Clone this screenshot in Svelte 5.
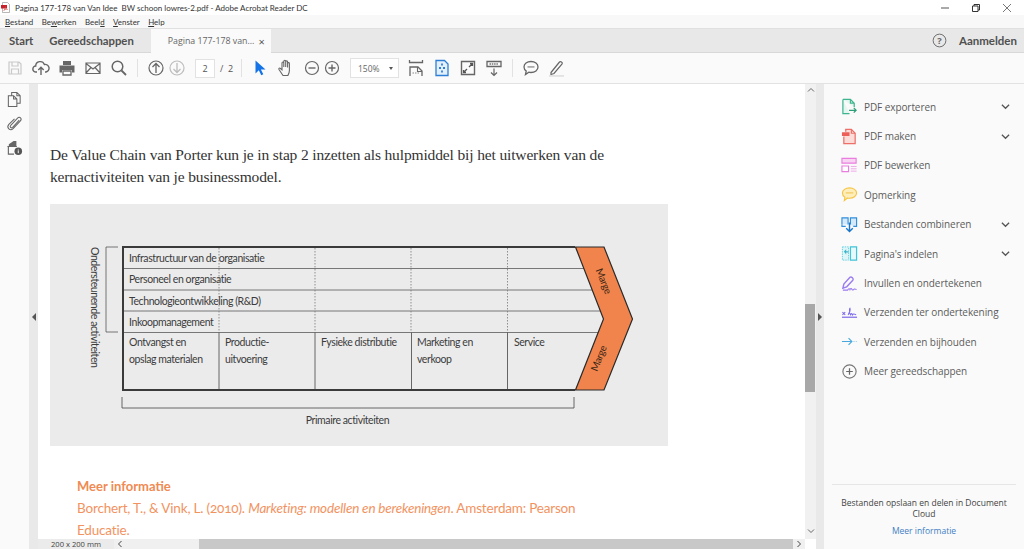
<script>
  const menu = [
    ['B', 'estand'],
    ['', 'Be', 'w', 'erken'],
    ['', 'Beel', 'd', ''],
    ['V', 'enster'],
    ['H', 'elp']
  ];

  const rows = [
    { y: 258, label: 'Infrastructuur van de organisatie' },
    { y: 279.5, label: 'Personeel en organisatie' },
    { y: 301, label: 'Technologieontwikkeling (R&D)' },
    { y: 322, label: 'Inkoopmanagement' }
  ];

  const cols = [
    { x: 129, lines: ['Ontvangst en', 'opslag materialen'] },
    { x: 225, lines: ['Productie-', 'uitvoering'] },
    { x: 321, lines: ['Fysieke distributie'] },
    { x: 417, lines: ['Marketing en', 'verkoop'] },
    { x: 514, lines: ['Service'] }
  ];

  const tools = [
    { label: 'PDF exporteren', chevron: true, icon: 'export' },
    { label: 'PDF maken', chevron: true, icon: 'create' },
    { label: 'PDF bewerken', icon: 'edit' },
    { label: 'Opmerking', icon: 'comment' },
    { label: 'Bestanden combineren', chevron: true, icon: 'combine' },
    { label: "Pagina's indelen", chevron: true, icon: 'organize' },
    { label: 'Invullen en ondertekenen', icon: 'fill' },
    { label: 'Verzenden ter ondertekening', icon: 'sign' },
    { label: 'Verzenden en bijhouden', icon: 'send' },
    { label: 'Meer gereedschappen', icon: 'more' }
  ];
</script>

<div class="window">
  <header class="titlebar">
    <svg class="pdf-icon" viewBox="0 0 10 11" width="10" height="11">
      <path d="M1.5.5h5l2 2v8h-7z" fill="#fff" stroke="#999" stroke-width=".7" />
      <path d="M0 3h6v3.5H0z" fill="#c8202a" />
      <path d="M2.5 9c1-1 2-3 2-4.5M3 8c1-.5 3-1 4-.5" fill="none" stroke="#d9534f" stroke-width=".6" />
    </svg>
    <span class="title">Pagina 177-178 van Van Idee&nbsp; BW schoon lowres-2.pdf - Adobe Acrobat Reader DC</span>
    <div class="winbtns">
      <svg viewBox="0 0 10 10" width="10" height="10"><path d="M1 5h8" stroke="#555" stroke-width="1" /></svg>
      <svg viewBox="0 0 10 10" width="10" height="10"><path d="M1.5 3H7v5.5H1.5zM3 3V1.5h5.5V7H7" fill="none" stroke="#333" stroke-width="1" /></svg>
      <svg viewBox="0 0 10 10" width="10" height="10"><path d="M1 1l8 8M9 1l-8 8" stroke="#555" stroke-width=".8" /></svg>
    </div>
  </header>

  <nav class="menubar">
    {#each menu as m}
      <span class="menu-item">
        {#if m.length === 2}<u>{m[0]}</u>{m[1]}{:else}{m[1]}<u>{m[2]}</u>{m[3]}{/if}
      </span>
    {/each}
  </nav>

  <div class="tabbar">
    <span class="tab-link">Start</span>
    <span class="tab-link">Gereedschappen</span>
    <div class="doc-tab">
      <span>Pagina 177-178 van...</span>
      <span class="tab-x">×</span>
    </div>
    <div class="tab-right">
      <svg viewBox="0 0 16 16" width="15" height="15">
        <circle cx="8" cy="8" r="6.8" fill="none" stroke="#666" stroke-width="1" />
        <text x="8" y="11.3" text-anchor="middle" class="help-q">?</text>
      </svg>
      <span class="signin">Aanmelden</span>
    </div>
  </div>

  <div class="toolbar">
    <div class="tb-group first">
      <svg class="ic" viewBox="0 0 18 18"><path d="M3 3h10l2 2v10H3z M6 3v4h6V3 M5.5 15v-5h7v5" fill="none" stroke="#c9c9c9" stroke-width="1.2" /></svg>
      <svg class="ic" viewBox="0 0 18 18"><path d="M5 13H4a3 3 0 0 1-.3-6A4.5 4.5 0 0 1 12.4 5.5 3.8 3.8 0 0 1 14 13h-1" fill="none" stroke="#666" stroke-width="1.4" /><path d="M9 16V8.5M6.3 11 9 8.3 11.7 11" fill="none" stroke="#666" stroke-width="1.4" /></svg>
      <svg class="ic" viewBox="0 0 18 18"><path d="M5 2h8v4H5z" fill="#666" /><path d="M1.5 6.5h15v7H14V11H4v2.5H1.5z" fill="#666" /><path d="M5 12h8v4H5z" fill="none" stroke="#666" stroke-width="1.3" /></svg>
      <svg class="ic" viewBox="0 0 18 18"><path d="M2 4h14v10.5H2zM2 4.5l7 5.5 7-5.5M2 14l5-5.5M16 14l-5-5.5" fill="none" stroke="#666" stroke-width="1.2" /></svg>
      <svg class="ic" viewBox="0 0 18 18"><circle cx="7.5" cy="7.5" r="5.3" fill="none" stroke="#666" stroke-width="1.5" /><path d="M11.5 11.5 16 16" stroke="#666" stroke-width="1.8" /></svg>
    </div>
    <i class="sep"></i>
    <div class="tb-group nav">
      <svg class="ic" viewBox="0 0 18 18"><circle cx="9" cy="9" r="7" fill="none" stroke="#666" stroke-width="1.2" /><path d="M9 14V4.5M5.5 8 9 4.5 12.5 8" fill="none" stroke="#666" stroke-width="1.3" /></svg>
      <svg class="ic" viewBox="0 0 18 18"><circle cx="9" cy="9" r="7" fill="none" stroke="#bdbdbd" stroke-width="1.2" /><path d="M9 4v9.5M5.5 10 9 13.5 12.5 10" fill="none" stroke="#bdbdbd" stroke-width="1.3" /></svg>
    </div>
    <div class="page-box">2</div>
    <span class="page-total">/&nbsp; 2</span>
    <i class="sep near"></i>
    <div class="tb-group hands">
      <svg class="ic" viewBox="0 0 18 18"><path d="M4.5 1.5v13l3.3-3.2 2.5 5 2-1-2.4-4.9h4.6z" fill="#1473e6" /></svg>
      <svg class="ic" viewBox="0 0 18 18"><path d="M6 16.5 2 10.5c-.7-1.2.7-2 1.5-1l1.500 1.300V4c0-1.300 1.800-1.300 1.800 0V8V2.200c0-1.300 1.900-1.300 1.900 0V8V2.800c0-1.300 1.900-1.300 1.900 0V8.500V4.500c0-1.200 1.800-1.200 1.800 0v7c0 2-.8 3.500-1.500 5z" fill="none" stroke="#666" stroke-width="1.1" /></svg>
      <svg class="ic" viewBox="0 0 18 18"><circle cx="9" cy="9" r="6.5" fill="none" stroke="#666" stroke-width="1.2" /><path d="M5.5 9h7" stroke="#666" stroke-width="1.4" /></svg>
      <svg class="ic plus" viewBox="0 0 18 18"><circle cx="9" cy="9" r="6.5" fill="none" stroke="#666" stroke-width="1.2" /><path d="M5.5 9h7M9 5.5v7" stroke="#666" stroke-width="1.4" /></svg>
    </div>
    <div class="zoom-box"><span>150%</span><b></b></div>
    <div class="tb-group views">
      <svg class="ic" viewBox="0 0 18 18"><path d="M2.5 1v2.500h13V1M3 17v-9h8l4 4v5" fill="none" stroke="#666" stroke-width="1.3" /><path d="M10.5 8v4.500H15" fill="none" stroke="#666" stroke-width="1.1" /><path d="M5.5 14h7" stroke="#888" stroke-dasharray="1.5 1" /></svg>
      <svg class="ic" viewBox="0 0 18 18"><path d="M3 1.5h8.500L15 5v11.500H3z" fill="#e3effb" stroke="#2d7fd6" stroke-width="1.3" /><path d="M9 4.5v2M6 9h2M10 9h2M9 11.5v2" stroke="#2d7fd6" stroke-width="1.8" /></svg>
      <svg class="ic" viewBox="0 0 18 18"><path d="M2.5 2.5h13v13h-13z" fill="none" stroke="#666" stroke-width="1.4" /><path d="M10 8l3.500-3.500M11 4.5h2.500V7M8 10l-3.500 3.500M7 13.5H4.500V11" fill="none" stroke="#555" stroke-width="1.3" /></svg>
      <svg class="ic" viewBox="0 0 18 18"><path d="M2 2.5h14v5H2z" fill="none" stroke="#666" stroke-width="1.3" /><path d="M4.5 5h9" stroke="#777" stroke-width="1.5" stroke-dasharray="1.5 .8" /><path d="M9 9.5v7M6 13.5l3 3 3-3" fill="none" stroke="#666" stroke-width="1.2" /></svg>
    </div>
    <i class="sep"></i>
    <div class="tb-group notes">
      <svg class="ic" viewBox="0 0 18 18"><path d="M9 2.5c4 0 7 2.400 7 5.500s-3 5.500-7 5.500c-.8 0-1.500 0-2.200-.3L3.500 15.500l.7-3.500C2.800 11 2 9.600 2 8c0-3.100 3-5.500 7-5.500z" fill="none" stroke="#666" stroke-width="1.3" /><path d="M5.5 7h7v1.800h-7z" fill="#aaa" /></svg>
      <svg class="ic" viewBox="0 0 18 18"><path d="M3 13.5 11.500 3c1-1.200 3.500.6 2.600 2L6 14.500l-3 1z" fill="none" stroke="#666" stroke-width="1.2" /><path d="M1 16.200h15v1.500H1z" fill="#ddd" /></svg>
    </div>
  </div>

  <div class="body">
    <aside class="rail">
      <svg viewBox="0 0 18 18" width="17" height="17"><path d="M6 5V1.500h5.500L15 5v8h-3.500M2.500 5H8l3.500 3.500v8h-9zM8 5v3.500h3.500M11.500 1.500V5H15" fill="none" stroke="#666" stroke-width="1.1" /></svg>
      <svg viewBox="0 0 18 18" width="17" height="17"><path d="M14 5.500 7 13c-1.500 1.500-3.500-.5-2-2l7-7.500c2.500-2.500 5.500.5 3 3l-7.500 8c-3 3-7.500-1-4.500-4.500L9 4" fill="none" stroke="#666" stroke-width="1.1" /></svg>
      <svg viewBox="0 0 18 18" width="17" height="17"><path d="M3 8V5.500L8 2h3v6z" fill="#666" /><path d="M1.500 8h10M2.500 8v8h6" fill="none" stroke="#666" stroke-width="1.2" /><circle cx="13" cy="13" r="4" fill="#555" /><path d="M13 12v3M13 10.500v.6" stroke="#fff" stroke-width="1" /></svg>
    </aside>

    <div class="handle left"><span></span></div>

    <main class="doc">
      <div class="doc-row">
        <div class="page">
          <p class="lead">De Value Chain van Porter kun je in stap 2 inzetten als hulpmiddel bij het uitwerken van de kernactiviteiten van je businessmodel.</p>

          <figure class="figure">
            <svg viewBox="50 204 618 242" width="618" height="242">
              <rect x="50" y="204" width="618" height="242" fill="#ebebeb" />
              <!-- side label and brackets -->
              <text class="d-text" transform="translate(90.5 247) rotate(90)">Ondersteunende activiteiten</text>
              <path d="M118 247h-12v85h12" fill="none" stroke="#555" stroke-width=".8" />
              <path d="M122 397v11h452v-11" fill="none" stroke="#444" stroke-width=".8" />
              <text class="d-text" x="347.5" y="424" text-anchor="middle">Primaire activiteiten</text>

              <!-- table lines -->
              <path d="M123 268.5h461M123 290h469M123 311h477M123 332.5h475" stroke="#777" stroke-width="1" />
              <path d="M219 248v85M315 248v85M411 248v85M507.5 248v85" stroke="#777" stroke-width=".8" stroke-dasharray="1.5 1.5" fill="none" />
              <path d="M219 332v58M315 332v58M411.5 332v58M507.5 332v58" stroke="#666" stroke-width="1" />
              <path d="M575 247H123v143h452" fill="none" stroke="#3a3a3a" stroke-width="2" />

              <!-- chevron -->
              <path d="M575.5 247H604L632.5 319 604 390H575.5L603.5 319z" fill="#f0844c" stroke="#2a2a2a" stroke-width="1.2" />
              <text class="d-text small" transform="translate(595.5 270) rotate(68)">Marge</text>
              <text class="d-text small" transform="translate(597 372) rotate(-68)">Marge</text>

              {#each rows as r}
                <text class="d-text" x="129" y={r.y + 3.5}>{r.label}</text>
              {/each}

              {#each cols as c}
                {#each c.lines as line, i}
                  <text class="d-text" x={c.x} y={346 + i * 17}>{line}</text>
                {/each}
              {/each}
            </svg>
          </figure>

          <div class="more">
            <h4>Meer informatie</h4>
            <p>Borchert, T., &amp; Vink, L. (2010). <em>Marketing: modellen en berekeningen</em>. Amsterdam: Pearson Educatie.</p>
          </div>
        </div>

        <div class="vscroll">
          <svg viewBox="0 0 8 6" width="8" height="6"><path d="M1 4.5 4 1.5l3 3" fill="none" stroke="#666" stroke-width="1" /></svg>
          <div class="vthumb"></div>
          <svg viewBox="0 0 8 6" width="8" height="6"><path d="M1 1.5l3 3 3-3" fill="none" stroke="#666" stroke-width="1" /></svg>
        </div>
      </div>

      <div class="hscroll">
        <span class="size">200 x 200 mm</span>
        <svg class="arrow" viewBox="0 0 6 8" width="6" height="8"><path d="M4.5 1 1.5 4l3 3" fill="none" stroke="#444" stroke-width="1" /></svg>
        <div class="hthumb"></div>
        <svg class="arrow" viewBox="0 0 6 8" width="6" height="8"><path d="M1.5 1l3 3-3 3" fill="none" stroke="#444" stroke-width="1" /></svg>
        <div class="corner"></div>
      </div>
    </main>

    <div class="handle right"><span></span></div>

    <aside class="panel">
      <ul class="tools">
        {#each tools as t}
          <li>
            <svg class="tool-ic" viewBox="0 0 18 18">
              {#if t.icon === 'export'}
                <path d="M2 1.5h8l4 4v4M10 1.5v4h4M9 16.5H2v-15" fill="#e4f6ef" stroke="#3fb58f" stroke-width="1.3" />
                <path d="M8.5 13H16M13.5 10.5 16 13l-2.5 2.5" fill="none" stroke="#2e9e78" stroke-width="1.3" />
              {:else if t.icon === 'create'}
                <path d="M5 4V1.5h6l4 4v11H3V9" fill="#fbdcd9" stroke="#ec6f68" stroke-width="1.3" />
                <path d="M1 4.5h8v4H1z" fill="#ec5f58" />
                <path d="M11 1.5v4h4" fill="none" stroke="#ec6f68" stroke-width="1.2" />
              {:else if t.icon === 'edit'}
                <path d="M1 1.5h15v5H1z" fill="#f8d4f3" stroke="#ea7ee0" stroke-width="1.2" />
                <path d="M1 9.5h7v6H1z" fill="#fff" stroke="#ea7ee0" stroke-width="1.2" />
                <path d="M10.5 10h6M10.5 12.5h6M10.5 15h6" stroke="#ec9ce5" stroke-width=".9" />
              {:else if t.icon === 'comment'}
                <path d="M9 2c4.3 0 7.5 2.400 7.5 5.500S13.300 13 9 13c-.8 0-1.500 0-2.200-.3L3.500 15.500l.6-3.600C2.400 11 1.500 9.400 1.500 7.500 1.500 4.400 4.700 2 9 2z" fill="#fdeebb" stroke="#f5c544" stroke-width="1.2" />
                <path d="M5 6.500h8V8H5z" fill="#f5cf6a" />
              {:else if t.icon === 'combine'}
                <path d="M1 9V2h6.500v7M10 9V2h6.500v9H13" fill="#d6e9fa" stroke="#2f8fdc" stroke-width="1.2" />
                <path d="M1 9v2h4" fill="none" stroke="#2f8fdc" stroke-width="1.2" />
                <path d="M9 7v9M5.500 13 9 16.500 12.500 13" fill="none" stroke="#1a76c9" stroke-width="1.5" />
              {:else if t.icon === 'organize'}
                <path d="M1.5 2H8v14H1.500z" fill="#dff5f8" stroke="#5fd0e0" stroke-width="1" stroke-dasharray="1.5 1" />
                <path d="M10 2h6.500v14H10z" fill="#e8f9fb" stroke="#3fc4d8" stroke-width="1.3" />
                <path d="M3 7l2.500-2.500v2H8V8H5.500v2z" fill="#3fb5cc" />
              {:else if t.icon === 'fill'}
                <path d="M2 14 3 9.500 9.500 2.500c1.300-1.300 4.500 1.200 3 3L6 12.500z" fill="none" stroke="#9b7bf0" stroke-width="1.5" />
                <path d="M2 16h5c1-1.500 2-2 2.500-.5.500-1.300 1.500-1.800 2-.4.500 1 1.500.8 2.500-.2.500-.3 1.500 0 2.500.4" fill="none" stroke="#9b7bf0" stroke-width="1.2" />
              {:else if t.icon === 'sign'}
                <path d="M1.500 8.500l3 3M4.500 8.500l-3 3" stroke="#7d6bea" stroke-width="1.1" />
                <path d="M7.500 11.500c1.500-2 2.500-5 2-7-1 .5-.5 5 .5 7 .8-1.500 1.500-2 2 0 .8-1.200 2-1.200 4 0" fill="none" stroke="#7d6bea" stroke-width="1.1" />
                <path d="M1 14h16" stroke="#7d6bea" stroke-width="1.3" />
              {:else if t.icon === 'send'}
                <path d="M1 9h10M8 5.500 11.500 9 8 12.500" fill="none" stroke="#4ba8dc" stroke-width="1.2" />
                <path d="M13 9h5" stroke="#a9d3ee" stroke-width="1" stroke-dasharray="1.5 1" />
              {:else}
                <circle cx="9" cy="9" r="7" fill="none" stroke="#777" stroke-width="1.2" />
                <path d="M5.500 9h7M9 5.500v7" stroke="#666" stroke-width="1.3" />
              {/if}
            </svg>
            <span class="tool-label">{t.label}</span>
            {#if t.chevron}
              <svg class="chev" viewBox="0 0 10 7" width="9" height="7"><path d="M1 1.5l4 4 4-4" fill="none" stroke="#555" stroke-width="1.4" /></svg>
            {/if}
          </li>
        {/each}
      </ul>
      <div class="promo">
        <p>Bestanden opslaan en delen in Document Cloud</p>
        <span class="promo-link">Meer informatie</span>
      </div>
    </aside>
  </div>
</div>

<style>
  :global(body) {
    margin: 0;
    background: #fff;
  }

  .window {
    width: 1024px;
    height: 549px;
    display: flex;
    flex-direction: column;
    overflow: hidden;
    font-family: "Open Sans", sans-serif;
    color: #4b4b4b;
  }

  .titlebar {
    height: 15px;
    display: flex;
    align-items: center;
    background: #fff;
    padding-left: 1px;
    font-family: Lato, sans-serif;
    font-size: 8px;
    color: #333;
  }

  .pdf-icon {
    margin-right: 4px;
  }

  .title {
    white-space: nowrap;
  }

  .winbtns {
    margin-left: auto;
    display: flex;
    gap: 21px;
    padding-right: 12px;
    align-items: center;
  }

  .menubar {
    height: 13px;
    display: flex;
    gap: 8.5px;
    align-items: center;
    background: #f8f8f8;
    padding-left: 5px;
    font-family: Lato, sans-serif;
    font-size: 7.9px;
    color: #333;
  }

  .tabbar {
    height: 25px;
    box-sizing: border-box;
    display: flex;
    align-items: center;
    background: #e8e8e8;
    border-top: 1px solid #e0e0e0;
    border-bottom: 1px solid #d8d8d8;
  }

  .tab-link {
    font-family: Lato, sans-serif;
    font-weight: 700;
    font-size: 11.3px;
    color: #505050;
    margin-left: 9px;
    margin-right: 7px;
  }

  .doc-tab {
    margin-left: 10px;
    width: 120px;
    height: 25px;
    margin-bottom: -1px;
    box-sizing: border-box;
    padding-left: 17px;
    display: flex;
    align-items: center;
    gap: 4px;
    background: #fafafa;
    font-size: 8.8px;
    color: #666;
    white-space: nowrap;
  }

  .tab-x {
    font-size: 11px;
    color: #555;
  }

  .tab-right {
    margin-left: auto;
    display: flex;
    align-items: center;
    gap: 12px;
    padding-right: 7px;
  }

  .help-q {
    font-family: "Open Sans", sans-serif;
    font-size: 10px;
    font-weight: 700;
    fill: #666;
  }

  .signin {
    font-family: Lato, sans-serif;
    font-weight: 700;
    font-size: 11.5px;
    color: #505050;
  }

  .toolbar {
    height: 31px;
    box-sizing: border-box;
    display: flex;
    align-items: center;
    background: #fafafa;
    border-bottom: 1px solid #e2e2e2;
    padding-left: 6px;
  }

  .tb-group {
    display: flex;
    align-items: center;
  }

  .ic {
    width: 18px;
    height: 18px;
    flex: none;
  }

  .first { gap: 8px; }
  .nav { gap: 3px; margin-left: 9px; }
  .hands { gap: 8px; margin-left: 9px; }
  .hands .plus { margin-left: -6px; }
  .views { gap: 8px; margin-left: 8px; }
  .notes { gap: 8px; margin-left: 9px; }

  .sep {
    width: 1px;
    height: 18px;
    background: #e2e2e2;
    margin-left: 9px;
  }

  .sep.near {
    margin-left: 6px;
  }

  .page-box {
    width: 20px;
    height: 19px;
    margin-left: 9px;
    box-sizing: border-box;
    border: 1px solid #e2e2e2;
    background: #fff;
    font-size: 9px;
    color: #555;
    display: flex;
    align-items: center;
    justify-content: center;
  }

  .page-total {
    width: 15px;
    white-space: nowrap;
    font-size: 9px;
    color: #555;
    margin-left: 5px;
  }

  .zoom-box {
    width: 49px;
    height: 20px;
    margin-left: 9px;
    box-sizing: border-box;
    border: 1px solid #e2e2e2;
    background: #fff;
    font-size: 8.5px;
    color: #666;
    display: flex;
    align-items: center;
    justify-content: space-between;
    padding: 0 5px 0 7px;
  }

  .zoom-box b {
    width: 0;
    height: 0;
    border-left: 2.5px solid transparent;
    border-right: 2.5px solid transparent;
    border-top: 3px solid #555;
  }

  .body {
    flex: 1;
    min-height: 0;
    display: flex;
  }

  .rail {
    width: 29px;
    flex: none;
    background: #fafafa;
    display: flex;
    flex-direction: column;
    align-items: center;
    gap: 7px;
    padding-top: 7px;
    box-sizing: border-box;
  }

  .handle {
    flex: none;
    background: #e9e9e9;
    display: flex;
    align-items: center;
    justify-content: center;
  }

  .handle.left { width: 9px; }
  .handle.right { width: 8px; }

  .handle span {
    width: 0;
    height: 0;
    border-top: 4px solid transparent;
    border-bottom: 4px solid transparent;
  }

  .handle.left span { border-right: 4px solid #555; }
  .handle.right span { border-left: 4px solid #555; }

  .doc {
    flex: 1;
    min-width: 0;
    display: flex;
    flex-direction: column;
  }

  .doc-row {
    flex: 1;
    min-height: 0;
    display: flex;
  }

  .page {
    flex: 1;
    min-width: 0;
    overflow: hidden;
    background: #fff;
    padding: 60px 0 0 12px;
  }

  .lead {
    margin: 0;
    width: 570px;
    font-family: "Liberation Serif", serif;
    font-size: 15.5px;
    line-height: 22px;
    color: #333;
    letter-spacing: -0.14px;
  }

  .figure {
    margin: 16px 0 0;
    width: 618px;
    height: 242px;
  }

  .figure svg {
    display: block;
  }

  .d-text {
    font-family: Lato, sans-serif;
    font-size: 10.5px;
    letter-spacing: -0.42px;
    fill: #3c3c3c;
  }

  .d-text.small {
    font-size: 10px;
    letter-spacing: -0.3px;
    fill: #3a2416;
  }

  .more {
    margin: 29px 0 0 27px;
    width: 505px;
    font-family: Lato, sans-serif;
    color: #f2935f;
  }

  .more h4 {
    margin: 0;
    font-size: 13px;
    line-height: 22px;
    font-weight: 700;
    color: #f08a52;
  }

  .more p {
    margin: 0;
    font-size: 13.5px;
    line-height: 22px;
    letter-spacing: -0.18px;
    font-variant-numeric: oldstyle-nums;
  }

  .vscroll {
    width: 11px;
    flex: none;
    background: #f1f1f1;
    display: flex;
    flex-direction: column;
    align-items: center;
    justify-content: space-between;
    padding: 3px 0 5px;
    box-sizing: border-box;
    position: relative;
  }

  .vthumb {
    position: absolute;
    left: 0;
    right: 1px;
    top: 220px;
    height: 88px;
    background: #a8a8a8;
  }

  .hscroll {
    height: 10px;
    flex: none;
    display: flex;
    align-items: center;
    background: #f0f0f0;
  }

  .size {
    width: 76px;
    height: 100%;
    background: #ebebeb;
    font-size: 7.6px;
    line-height: 10px;
    text-align: center;
    color: #444;
    flex: none;
  }

  .arrow {
    flex: none;
    margin: 0 3px;
  }

  .hscroll .arrow:first-of-type {
    margin-right: 76px;
  }

  .hthumb {
    flex: 1;
    height: 100%;
    background: #c8c8c8;
  }

  .corner {
    width: 11px;
    height: 100%;
    background: #fff;
    flex: none;
  }

  .panel {
    width: 200px;
    flex: none;
    background: #fafafa;
    display: flex;
    flex-direction: column;
    box-sizing: border-box;
  }

  .tools {
    list-style: none;
    margin: 0;
    padding: 8px 0 0 17px;
    flex: 1;
  }

  .tools li {
    height: 29.4px;
    display: flex;
    align-items: center;
    gap: 6px;
    padding-right: 14px;
  }

  .tool-ic {
    width: 17px;
    height: 17px;
    flex: none;
  }

  .tool-label {
    font-size: 10px;
    letter-spacing: -0.08px;
    color: #5c5c5c;
    white-space: nowrap;
  }

  .chev {
    margin-left: auto;
  }

  .promo {
    margin: 0 8px;
    height: 65px;
    box-sizing: border-box;
    border-top: 1px solid #e6e6e6;
    padding: 12px 7px 0;
    text-align: center;
    font-size: 8.5px;
    color: #444;
  }

  .promo p {
    margin: 0 0 6px;
    line-height: 11px;
  }

  .promo-link {
    color: #3f7fc4;
  }
</style>
